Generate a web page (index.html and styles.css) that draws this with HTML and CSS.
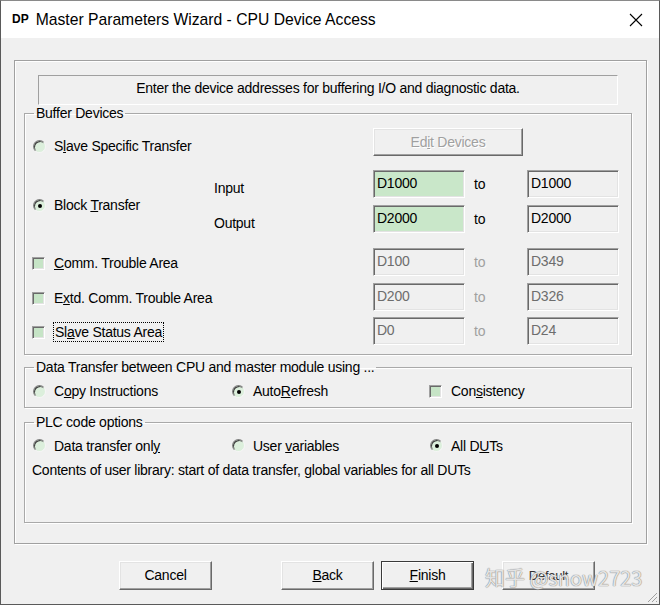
FILE: index.html
```html
<!DOCTYPE html>
<html>
<head>
<meta charset="utf-8">
<link rel="stylesheet" href="styles.css">
</head>
<body>
<div class="window">
  <div class="titlebar">
    <span class="app-icon">DP</span>
    <span class="title">Master Parameters Wizard - CPU Device Access</span>
    <svg class="close" width="14" height="14" viewBox="0 0 14 14"><path d="M1 1 L13 13 M13 1 L1 13" stroke="#000" stroke-width="1.1" fill="none"/></svg>
  </div>
  <div class="client">
    <div class="frame">
      <div class="header">Enter the device addresses for buffering I/O and diagnostic data.</div>

      <fieldset class="group buffer">
        <legend>Buffer Devices</legend>
        <div class="buffer-grid">
          <label class="opt r1"><span class="radio"></span><span>S<u>l</u>ave Specific Transfer</span></label>
          <div class="btn edit">Ed<u>i</u>t Devices</div>

          <label class="opt block"><span class="radio on"></span><span>Block <u>T</u>ransfer</span></label>
          <div class="io in">Input</div>
          <div class="field green">D1000</div>
          <div class="to">to</div>
          <div class="field">D1000</div>

          <div class="io">Output</div>
          <div class="field green">D2000</div>
          <div class="to">to</div>
          <div class="field">D2000</div>

          <label class="opt span2"><span class="check"></span><span><u>C</u>omm. Trouble Area</span></label>
          <div class="field off">D100</div>
          <div class="to off">to</div>
          <div class="field off">D349</div>

          <label class="opt span2"><span class="check"></span><span>E<u>x</u>td. Comm. Trouble Area</span></label>
          <div class="field off">D200</div>
          <div class="to off">to</div>
          <div class="field off">D326</div>

          <label class="opt span2"><span class="check"></span><span class="focus">Sl<u>a</u>ve Status Area</span></label>
          <div class="field off">D0</div>
          <div class="to off">to</div>
          <div class="field off">D24</div>
        </div>
      </fieldset>

      <fieldset class="group transfer">
        <legend>Data Transfer between CPU and master module using ...</legend>
        <div class="options">
          <label class="opt"><span class="radio"></span><span>C<u>o</u>py Instructions</span></label>
          <label class="opt"><span class="radio on"></span><span>Auto<u>R</u>efresh</span></label>
          <label class="opt"><span class="check"></span><span>Con<u>s</u>istency</span></label>
        </div>
      </fieldset>

      <fieldset class="group plc">
        <legend>PLC code options</legend>
        <div class="plc-body">
          <div class="options">
            <label class="opt"><span class="radio"></span><span>Data transfer onl<u>y</u></span></label>
            <label class="opt"><span class="radio"></span><span>User <u>v</u>ariables</span></label>
            <label class="opt"><span class="radio on"></span><span>All D<u>U</u>Ts</span></label>
          </div>
          <p class="desc">Contents of user library: start of data transfer, global variables for all DUTs</p>
        </div>
      </fieldset>
    </div>

    <div class="buttons">
      <div class="btn cancel">Cancel</div>
      <div class="btn back"><u>B</u>ack</div>
      <div class="btn finish default"><u>F</u>inish</div>
      <div class="btn dflt"><span class="dflt-text">Default</span></div>
    </div>
  </div>
  <div class="watermark">知乎 @snow2723</div>
  <svg class="grip" width="12" height="12" viewBox="0 0 12 12"><path d="M11 2 L2 11 M11 6 L6 11 M11 10 L10 11" stroke="#a0a0a0" stroke-width="1" fill="none"/></svg>
</div>
</body>
</html>
```

FILE: styles.css
```css
* { box-sizing: border-box; }
html, body { margin: 0; padding: 0; }
body {
  width: 660px;
  height: 605px;
  overflow: hidden;
  font-family: "Liberation Sans", Arial, sans-serif;
  font-size: 14px;
  letter-spacing: -0.25px;
  color: #000;
  background: #f0f0f0;
}
.window {
  position: relative;
  width: 660px;
  height: 605px;
  border: 1px solid #5a5a5a;
  border-top-color: #8a8a8a;
  background: #f0f0f0;
}
.titlebar {
  height: 37px;
  background: #fff;
  display: flex;
  align-items: center;
  padding-left: 11px;
}
.app-icon {
  font-weight: bold;
  font-size: 12px;
  letter-spacing: 0;
  margin-right: 7px;
  margin-top: -2px;
}
.title {
  font-size: 15.7px;
  letter-spacing: 0;
}
.close { margin-left: auto; margin-right: 16px; margin-top: 1px; }

.client { padding-top: 22px; }
.frame {
  margin-left: 13px;
  width: 633px;
  height: 484px;
  border: 1px solid #a0a0a0;
  box-shadow: inset 1px 1px 0 #fff, 1px 1px 0 #fff;
}
.header {
  margin: 14px 0 0 23px;
  width: 580px;
  height: 30px;
  border-top: 1px solid #a0a0a0;
  border-left: 1px solid #a0a0a0;
  border-right: 1px solid #fff;
  border-bottom: 1px solid #fff;
  display: flex;
  align-items: center;
  justify-content: center;
  padding-bottom: 5px;
}
.group {
  margin: 0 0 0 9px;
  padding: 0;
  width: 608px;
  min-width: 0;
  border: 1px solid #a9a9a9;
  box-shadow: inset 1px 1px 0 #fff, 1px 1px 0 #fff;
}
.group legend {
  margin-left: 9px;
  padding: 0 2px;
  line-height: 16px;
}
.buffer { margin-top: 0; }
.buffer-grid {
  display: grid;
  margin-left: 8px;
  grid-template-columns: 181px 159px 92px 62px 92px;
  grid-template-rows: 49px 35px 43px 35px 34px 28px;
  align-items: start;
  padding-bottom: 9px;
}
.opt {
  display: flex;
  align-items: center;
  gap: 8px;
  line-height: 18px;
  white-space: nowrap;
}
.buffer-grid .opt { grid-column: 1; margin-top: 6px; }
.buffer-grid .opt.span2 { grid-column: 1 / 3; }
.buffer-grid .opt.r1 { margin-top: 16px; }
.buffer-grid .opt.block { grid-row: 2 / 4; margin-top: 26px; }
.edit { grid-column: 3 / 6; margin-top: 7px; width: 150px; height: 28px; color: #a0a0a0; text-shadow: 1px 1px 0 #fff; }
.io { grid-column: 2; margin-top: 10px; margin-left: 0; line-height: 16px; }
.field {
  height: 28px;
  border-style: solid;
  border-width: 1px;
  border-color: #a0a0a0 #fff #fff #a0a0a0;
  box-shadow: inset 1px 1px 0 #696969, inset -1px -1px 0 #e3e3e3;
  padding: 3px 0 0 3px;
  line-height: 18px;
  background: #f0f0f0;
}
.field.green { background: #c9e7c9; }
.field.off { color: #6d6d6d; }
.to { padding-left: 9px; margin-top: 6px; line-height: 16px; }
.to.off { color: #a0a0a0; }

.radio {
  flex: none;
  width: 13px;
  height: 13px;
  border-radius: 50%;
  border: 1px solid;
  border-color: #808080 #f6f6f6 #f6f6f6 #808080;
  box-shadow: inset 1px 1px 0 #404040;
  background: #dcefdc;
  position: relative;
}
.radio.on::after {
  content: "";
  position: absolute;
  left: 4px;
  top: 4px;
  width: 4px;
  height: 4px;
  border-radius: 50%;
  background: #000;
}
.check {
  flex: none;
  width: 13px;
  height: 13px;
  border: 1px solid;
  border-color: #a0a0a0 #fff #fff #a0a0a0;
  box-shadow: inset 1px 1px 0 #696969, inset -1px -1px 0 #e3e3e3;
  background: #c6e4c6;
  margin-left: -1px;
  margin-right: 1px;
}
.focus { outline: 1px dotted #000; outline-offset: 0; padding: 0 1px; }

.transfer { margin-top: 4px; }
.options {
  display: grid;
  grid-template-columns: 199px 198px auto;
  margin-left: 8px;
  height: 33px;
  align-items: center;
}
.transfer .options { height: 32px; }
.plc { margin-top: 6px; }
.plc-body { height: 92px; }
.plc .options { height: 31px; }
.desc { margin: 1px 0 0 7px; line-height: 16px; }

.btn {
  display: flex;
  align-items: center;
  justify-content: center;
  background: #f0f0f0;
  border: 1px solid;
  border-color: #fff #696969 #696969 #fff;
  box-shadow: inset -1px -1px 0 #a0a0a0, inset 1px 1px 0 #e3e3e3;
}
.buttons {
  display: flex;
  margin-top: 17px;
  padding-left: 118px;
}
.buttons .btn { width: 93px; height: 29px; padding-bottom: 1px; }
.buttons .back { margin-left: 69px; }
.buttons .finish { margin-left: 7px; }
.buttons .dflt { margin-left: 28px; }
.dflt-text { font-size: 13px; color: #333; }
.btn.default {
  border: 1px solid #3a3a3a;
  box-shadow: inset 1px 1px 0 #fff, inset -1px -1px 0 #696969, inset -2px -2px 0 #a0a0a0;
}
.watermark {
  position: absolute;
  left: 484px;
  top: 562px;
  font-family: "Noto Sans CJK SC", "Liberation Sans", sans-serif;
  font-size: 20px;
  letter-spacing: 0;
  color: rgba(255, 255, 255, 0.8);
  text-shadow: 0 0 1px #808080, 0 0 1px #808080;
  pointer-events: none;
}
.grip { position: absolute; right: 1px; bottom: 1px; }
```
